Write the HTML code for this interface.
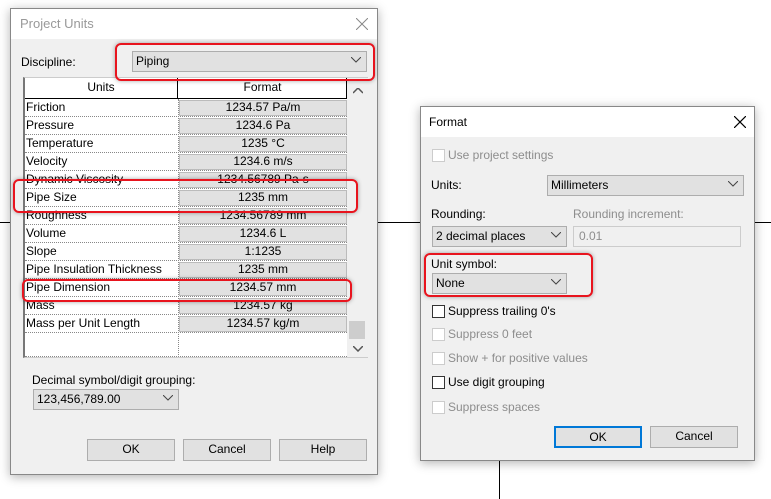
<!DOCTYPE html><html><head><style>
*{box-sizing:border-box;margin:0;padding:0}
body{width:771px;height:499px;background:#fff;position:relative;overflow:hidden;font-family:"Liberation Sans",sans-serif;font-size:12px;color:#000}
.a{position:absolute}
.dlg{background:#f0f0f0;border:1px solid #888;box-shadow:0 2px 10px rgba(0,0,0,.3)}
.tb{background:#fff;left:0;right:0;top:0;height:30px}
.cb{background:#e1e1e1;border:1px solid #adadad;font-size:12px;line-height:17px;padding-left:3px}
.cb svg{position:absolute;right:5px;top:5px}
.btn{background:#e1e1e1;border:1px solid #adadad;text-align:center;line-height:19px}
.red{border:2px solid #e8141e;border-radius:6px;box-shadow:0 0 4px rgba(0,0,0,.35)}
.chk{width:13px;height:13px;border:1px solid #333;background:#fff}
.chk.d{border-color:#ccc}
.g{color:#8d8d8d}
.row{position:absolute;left:0;width:322px;height:18px;border-bottom:1px dotted #888}
.row .u{position:absolute;left:1px;top:0px;line-height:16px}
.row .f{position:absolute;left:154px;top:1px;width:168px;height:16px;background:#e1e1e1;border:1px solid #bbb;text-align:center;line-height:13px}
</style></head><body>
<div class="a" style="left:0;top:222px;width:771px;height:1px;background:#000"></div>
<div class="a" style="left:499px;top:440px;width:1px;height:59px;background:#000"></div>

<div class="a dlg" style="left:10px;top:8px;width:368px;height:467px">
<div class="a tb"><span class="a g" style="left:9px;top:7px;font-size:13px;color:#999">Project Units</span>
<svg class="a" style="left:345px;top:9px" width="12" height="12"><path d="M0 0L12 12M12 0L0 12" stroke="#888" stroke-width="1"/></svg></div>
<span class="a" style="left:10px;top:46px">Discipline:</span>
<div class="a cb" style="left:121px;top:42px;width:235px;height:21px;padding-top:1px">Piping<svg width="10" height="6"><path d="M0 0L5 5L10 0" stroke="#444" fill="none"/></svg></div>
<div class="a" style="left:12px;top:68px;width:345px;height:281px;background:#fff;border:1px solid #ccc;border-left:2px solid #777">
 <div class="a" style="left:0;top:0;width:322px;height:21px;border-bottom:1px solid #000">
  <div class="a" style="left:0;top:0;width:153px;height:21px;border-right:1px solid #000;text-align:center;line-height:19px">Units</div>
  <div class="a" style="left:154px;top:0;width:168px;height:21px;text-align:center;line-height:19px;border-right:1px solid #000">Format</div>
 </div>
 <div class="a" style="left:153px;top:21px;width:1px;height:258px;border-left:1px dotted #888"></div>
 <div class="a" style="left:322px;top:0;width:21px;height:279px;background:#f0f0f0"></div>
 <svg class="a" style="left:328px;top:10px" width="10" height="6"><path d="M0 5L5 0L10 5" stroke="#555" fill="none" stroke-width="1.5"/></svg>
 <div class="a" style="left:324px;top:243px;width:16px;height:18px;background:#cdcdcd"></div>
 <svg class="a" style="left:328px;top:268px" width="10" height="6"><path d="M0 0L5 5L10 0" stroke="#555" fill="none" stroke-width="1.5"/></svg>
 <div class="a" style="left:0;top:21px">
  <div class="row" style="top:0"><span class="u">Friction</span><div class="f">1234.57 Pa/m</div></div>
  <div class="row" style="top:18px"><span class="u">Pressure</span><div class="f">1234.6 Pa</div></div>
  <div class="row" style="top:36px"><span class="u">Temperature</span><div class="f">1235 °C</div></div>
  <div class="row" style="top:54px"><span class="u">Velocity</span><div class="f">1234.6 m/s</div></div>
  <div class="row" style="top:72px"><span class="u">Dynamic Viscosity</span><div class="f">1234.56789 Pa-s</div></div>
  <div class="row" style="top:90px"><span class="u">Pipe Size</span><div class="f">1235 mm</div></div>
  <div class="row" style="top:108px"><span class="u">Roughness</span><div class="f">1234.56789 mm</div></div>
  <div class="row" style="top:126px"><span class="u">Volume</span><div class="f">1234.6 L</div></div>
  <div class="row" style="top:144px"><span class="u">Slope</span><div class="f">1:1235</div></div>
  <div class="row" style="top:162px"><span class="u">Pipe Insulation Thickness</span><div class="f">1235 mm</div></div>
  <div class="row" style="top:180px"><span class="u">Pipe Dimension</span><div class="f">1234.57 mm</div></div>
  <div class="row" style="top:198px"><span class="u">Mass</span><div class="f">1234.57 kg</div></div>
  <div class="row" style="top:216px"><span class="u">Mass per Unit Length</span><div class="f">1234.57 kg/m</div></div>
 </div>
 <div class="a" style="left:0;top:278px;width:322px;border-bottom:1px dotted #888"></div>
</div>
<span class="a" style="left:21px;top:364px">Decimal symbol/digit grouping:</span>
<div class="a cb" style="left:22px;top:380px;width:146px;height:21px;padding-top:1px">123,456,789.00<svg width="10" height="6"><path d="M0 0L5 5L10 0" stroke="#444" fill="none"/></svg></div>
<div class="a btn" style="left:76px;top:430px;width:88px;height:22px">OK</div>
<div class="a btn" style="left:172px;top:430px;width:88px;height:22px">Cancel</div>
<div class="a btn" style="left:268px;top:430px;width:88px;height:22px">Help</div>
</div>
<div class="a red" style="left:115px;top:43px;width:260px;height:38px"></div>
<div class="a red" style="left:13px;top:179px;width:345px;height:34px"></div>
<div class="a red" style="left:22px;top:279px;width:330px;height:23px"></div>

<div class="a dlg" style="left:420px;top:106px;width:335px;height:355px">
<div class="a tb"><span class="a" style="left:8px;top:8px">Format</span>
<svg class="a" style="left:313px;top:9px" width="12" height="12"><path d="M0 0L12 12M12 0L0 12" stroke="#000" stroke-width="1.2"/></svg></div>
<div class="a chk d" style="left:11px;top:42px"></div><span class="a g" style="left:27px;top:41px">Use project settings</span>
<span class="a" style="left:10px;top:71px">Units:</span>
<div class="a cb" style="left:126px;top:68px;width:197px;height:21px;padding-top:1px">Millimeters<svg width="10" height="6"><path d="M0 0L5 5L10 0" stroke="#444" fill="none"/></svg></div>
<span class="a" style="left:10px;top:100px">Rounding:</span>
<span class="a g" style="left:152px;top:100px">Rounding increment:</span>
<div class="a cb" style="left:11px;top:119px;width:135px;height:21px;padding-top:1px">2 decimal places<svg width="10" height="6"><path d="M0 0L5 5L10 0" stroke="#444" fill="none"/></svg></div>
<div class="a g" style="left:152px;top:119px;width:168px;height:21px;border:1px solid #ccc;padding:2px 0 0 5px">0.01</div>
<span class="a" style="left:10px;top:150px">Unit symbol:</span>
<div class="a cb" style="left:11px;top:166px;width:135px;height:21px;padding-top:1px">None<svg width="10" height="6"><path d="M0 0L5 5L10 0" stroke="#444" fill="none"/></svg></div>
<div class="a chk" style="left:11px;top:198px"></div><span class="a" style="left:27px;top:197px">Suppress trailing 0's</span>
<div class="a chk d" style="left:11px;top:221px"></div><span class="a g" style="left:27px;top:220px">Suppress 0 feet</span>
<div class="a chk d" style="left:11px;top:245px"></div><span class="a g" style="left:27px;top:244px">Show + for positive values</span>
<div class="a chk" style="left:11px;top:269px"></div><span class="a" style="left:27px;top:268px">Use digit grouping</span>
<div class="a chk d" style="left:11px;top:294px"></div><span class="a g" style="left:27px;top:293px">Suppress spaces</span>
<div class="a btn" style="left:133px;top:319px;width:88px;height:22px;border:2px solid #0078d7;line-height:18px">OK</div>
<div class="a btn" style="left:229px;top:319px;width:88px;height:22px">Cancel</div>
</div>
<div class="a red" style="left:424px;top:253px;width:169px;height:44px"></div>
</body></html>
